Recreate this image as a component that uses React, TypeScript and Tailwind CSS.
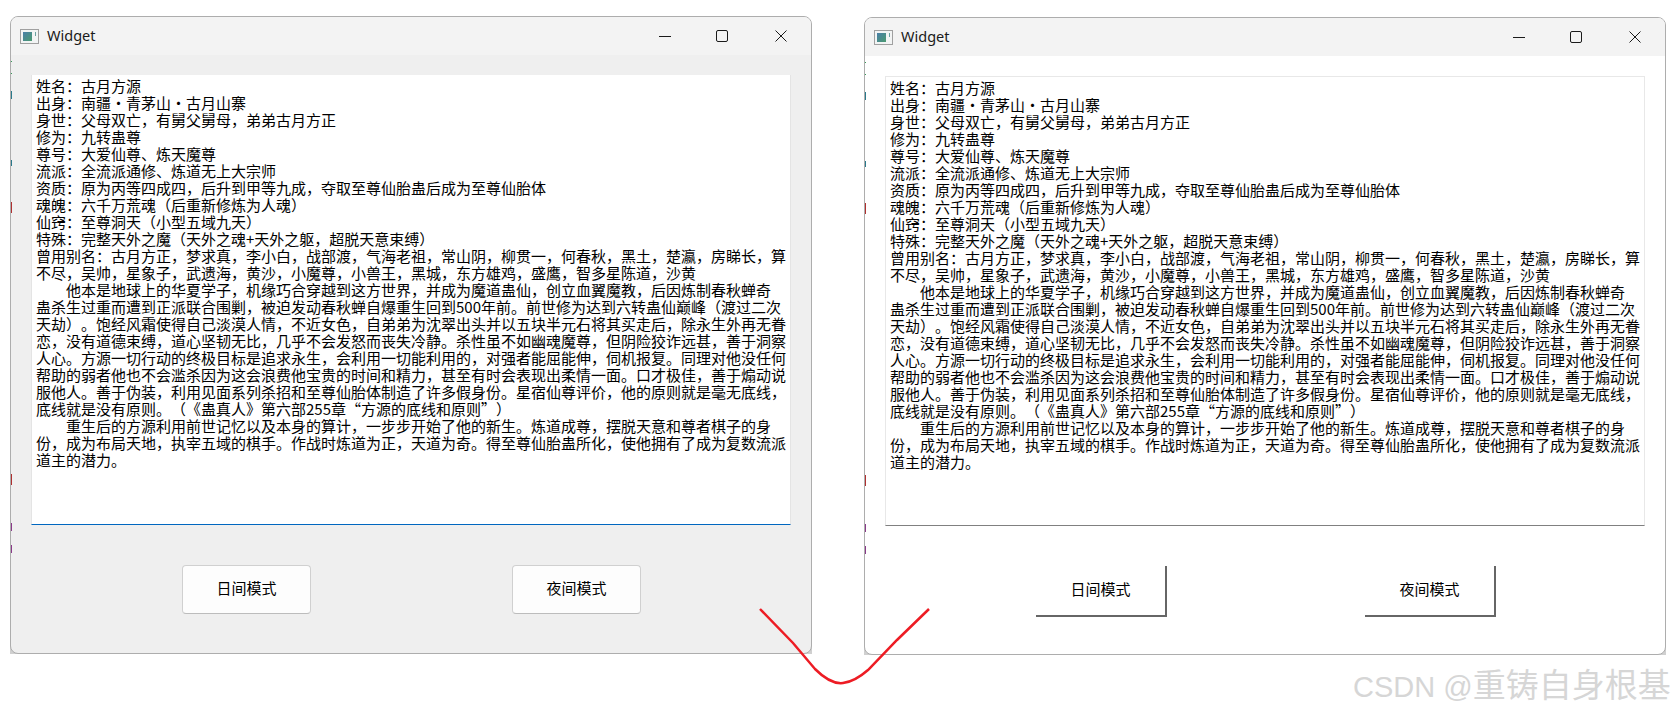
import React from "react";

const RAW = [
  "姓名:古月方源",
  "出身:南疆・青茅山・古月山寨",
  "身世:父母双亡,有舅父舅母,弟弟古月方正",
  "修为:九转蛊尊",
  "尊号:大爱仙尊、炼天魔尊",
  "流派:全流派通修、炼道无上大宗师",
  "资质:原为丙等四成四,后升到甲等九成,夺取至尊仙胎蛊后成为至尊仙胎体",
  "魂魄:六千万荒魂(后重新修炼为人魂)",
  "仙窍:至尊洞天(小型五域九天)",
  "特殊:完整天外之魔(天外之魂+天外之躯,超脱天意束缚)",
  "曾用别名:古月方正,梦求真,李小白,战部渡,气海老祖,常山阴,柳贯一,何春秋,黑土,楚瀛,房睇长,算",
  "不尽,吴帅,星象子,武遗海,黄沙,小魔尊,小兽王,黑城,东方雄鸡,盛鹰,智多星陈道,沙黄",
  "  他本是地球上的华夏学子,机缘巧合穿越到这方世界,并成为魔道蛊仙,创立血翼魔教,后因炼制春秋蝉奇",
  "蛊杀生过重而遭到正派联合围剿,被迫发动春秋蝉自爆重生回到500年前。前世修为达到六转蛊仙巅峰(渡过二次",
  "天劫)。饱经风霜使得自己淡漠人情,不近女色,自弟弟为沈翠出头并以五块半元石将其买走后,除永生外再无眷",
  "恋,没有道德束缚,道心坚韧无比,几乎不会发怒而丧失冷静。杀性虽不如幽魂魔尊,但阴险狡诈远甚,善于洞察",
  "人心。方源一切行动的终极目标是追求永生,会利用一切能利用的,对强者能屈能伸,伺机报复。同理对他没任何",
  "帮助的弱者他也不会滥杀因为这会浪费他宝贵的时间和精力,甚至有时会表现出柔情一面。口才极佳,善于煽动说",
  "服他人。善于伪装,利用见面系列杀招和至尊仙胎体制造了许多假身份。星宿仙尊评价,他的原则就是毫无底线,",
  "底线就是没有原则。(《蛊真人》第六部255章“方源的底线和原则”)",
  "  重生后的方源利用前世记忆以及本身的算计,一步步开始了他的新生。炼道成尊,摆脱天意和尊者棋子的身",
  "份,成为布局天地,执宰五域的棋手。作战时炼道为正,天道为奇。得至尊仙胎蛊所化,使他拥有了成为复数流派",
  "道主的潜力。",
];

const LINES = RAW.map((l) =>
  l
    .replace(/:/g, "\uFF1A")
    .replace(/,/g, "\uFF0C")
    .replace(/\(/g, "\uFF08")
    .replace(/\)/g, "\uFF09")
    .replace(/ /g, "\u3000"),
);

function AppIcon() {
  return (
    <svg width="19" height="15" viewBox="0 0 19 15" className="shrink-0">
      <defs>
        <linearGradient id="qtIcon" x1="0" y1="0" x2="1" y2="1">
          <stop offset="0" stopColor="#4a7fa8" />
          <stop offset="1" stopColor="#4a9a70" />
        </linearGradient>
      </defs>
      <rect x="0.5" y="0.5" width="18" height="14" fill="#f2f4f4" stroke="#a0a0a0" />
      <rect x="3" y="3" width="9" height="9" fill="url(#qtIcon)" />
      <rect x="15" y="3" width="1" height="4" fill="#6aa0a0" />
    </svg>
  );
}

function Controls() {
  return (
    <div className="ml-auto flex items-center">
      <svg width="12" height="12" viewBox="0 0 12 12" className="mr-[45px]">
        <path d="M0 6.5H12" stroke="#1a1a1a" strokeWidth="1" fill="none" />
      </svg>
      <svg width="12" height="12" viewBox="0 0 12 12" className="mr-[47px]">
        <rect x="0.5" y="0.5" width="11" height="11" rx="1.5" stroke="#1a1a1a" strokeWidth="1" fill="none" />
      </svg>
      <svg width="12" height="12" viewBox="0 0 12 12" className="mr-[24px]">
        <path d="M0.5 0.5L11.5 11.5M11.5 0.5L0.5 11.5" stroke="#1a1a1a" strokeWidth="1" fill="none" />
      </svg>
    </div>
  );
}

function EdgeMarks() {
  return (
    <>
      <span className="absolute left-0 top-[44px] h-px w-px bg-[#3a9a5a]" />
      <span className="absolute left-0 top-[56px] h-px w-px bg-[#3a9a5a]" />
      <span className="absolute left-0 top-[74px] h-2 w-px bg-[#2a7a8c]" />
      <span className="absolute left-0 top-[143px] h-[6px] w-px bg-[#2a7a8c]" />
      <span className="absolute left-0 top-[185px] h-[11px] w-px bg-[#b03030]" />
      <span className="absolute left-0 top-[457px] h-[11px] w-px bg-[#b03030]" />
      <span className="absolute left-0 top-[506px] h-2 w-px bg-[#8a3a8a]" />
      <span className="absolute left-0 top-[528px] h-2 w-px bg-[#8a3a8a]" />
    </>
  );
}

function Win({ night }: { night: boolean }) {
  return (
    <div className={night ? "relative mt-px" : "relative"}>
      <span className="absolute bottom-0 left-0 h-2 w-2 bg-[#d0d0d0]" />
      <span className="absolute bottom-0 right-0 h-2 w-2 bg-[#d0d0d0]" />
      <div
        className={
          night
            ? "relative flex h-[638px] w-[802px] flex-col overflow-hidden rounded-lg border border-[#adadad] bg-white"
            : "relative flex h-[638px] w-[802px] flex-col overflow-hidden rounded-lg border border-[#adadad] bg-[#efefef]"
        }
      >
        <div className="flex h-[38px] shrink-0 items-center bg-[#f3f3f3] pl-[9px]">
          <AppIcon />
          <span className="ml-2 font-['Noto_Sans'] text-[14.5px] text-[#1a1a1a]">Widget</span>
          <Controls />
        </div>
        <div className="flex flex-1 flex-col pl-5 pr-5 pt-5">
          <div
            className={
              night
                ? "h-[450px] border border-[#e8e8e8] border-b-[#808080] bg-white pl-1 pt-[2px]"
                : "h-[450px] border-x border-b border-x-[#e4e4e4] border-b-[#0067c0] bg-white pl-1 pt-[2px]"
            }
          >
            {LINES.map((l, i) => (
              <div
                key={i}
                className="h-[17px] whitespace-pre font-['Noto_Sans_CJK_SC',sans-serif] text-[15px] leading-[17px] text-black [text-spacing-trim:space-all]"
              >
                {l}
              </div>
            ))}
          </div>
          <div className={night ? "mt-10 flex gap-[198px] pl-[151px]" : "mt-10 flex gap-[201px] pl-[151px]"}>
            {["日间模式", "夜间模式"].map((t) => (
              <button
                key={t}
                className={
                  night
                    ? "flex h-[51px] w-[131px] items-center justify-center border-b-2 border-r-2 border-b-[#666666] border-r-[#666666] bg-white text-[15px] text-black"
                    : "flex h-[49px] w-[129px] items-center justify-center rounded border border-[#d0d0d0] border-b-[#bcbcbc] bg-[#fdfdfd] text-[15px] text-black"
                }
              >
                {t}
              </button>
            ))}
          </div>
        </div>
        <EdgeMarks />
      </div>
    </div>
  );
}

export default function App() {
  return (
    <div
      lang="zh-CN"
      className="relative flex h-[716px] w-full items-start gap-[52px] overflow-hidden bg-white pl-[10px] pt-4 font-['Liberation_Sans','Noto_Sans_CJK_SC',sans-serif]"
    >
      <Win night={false} />
      <Win night />
      <svg className="pointer-events-none absolute left-0 top-0" width="1673" height="716" viewBox="0 0 1673 716">
        <path
          d="M760 609L793 643L815 669C825 679 835 684 843 683C852 682 860 677 868 670L897 640L929 609"
          fill="none"
          stroke="#ed1c24"
          strokeWidth="2.5"
        />
      </svg>
      <div className="absolute left-[1353px] top-[665px] whitespace-nowrap text-[29px] leading-[42px] text-[#d6d6d6]">
        CSDN @<span className="text-[33px]">重铸自身根基</span>
      </div>
    </div>
  );
}
